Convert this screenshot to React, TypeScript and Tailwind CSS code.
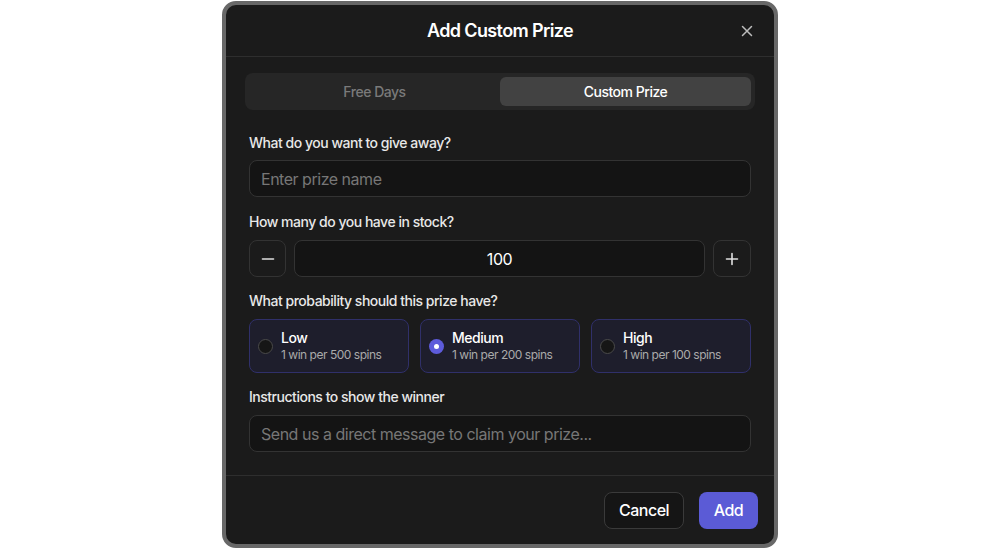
import { useState } from "react"

const levels = [
  { id: "low", title: "Low", sub: "1 win per 500 spins" },
  { id: "medium", title: "Medium", sub: "1 win per 200 spins" },
  { id: "high", title: "High", sub: "1 win per 100 spins" },
]

function Label({ children }: { children: string }) {
  return <div className="text-[14px] leading-5 font-medium text-[#e8e8e8]">{children}</div>
}

export default function App() {
  const [level, setLevel] = useState("medium")
  const [count, setCount] = useState(100)

  return (
    <div
      className="w-[1000px] h-[548px] bg-white flex justify-center tracking-[-0.03em]"
      style={{ fontFamily: "Inter, 'Noto Sans', sans-serif" }}
    >
      <div className="w-[556px] h-[547px] mt-[1px] rounded-[14px] border-4 border-[#686868] bg-[#1b1b1b] flex flex-col">
        {/* header */}
        <div className="h-[52px] flex items-center justify-center relative border-b border-[#2e2e2e]">
          <h2 className="text-[18px] font-semibold text-white tracking-[-0.035em]">Add Custom Prize</h2>
          <button className="absolute right-[20px] top-[19px] text-[#bdbdbd]">
            <svg width="14" height="14" viewBox="0 0 14 14" fill="none" stroke="currentColor" strokeWidth="1.5" strokeLinecap="round">
              <path d="M2.5 2.5l9 9M11.5 2.5l-9 9" />
            </svg>
          </button>
        </div>

        {/* body */}
        <div className="flex-1 px-[19px] pt-[16px]">
          <div className="h-[37px] rounded-lg bg-[#262626] p-1 grid grid-cols-2">
            <button className="rounded-md text-[14px] font-medium text-[#7a7a7a]">Free Days</button>
            <button className="rounded-md bg-[#424242] text-[14px] font-medium text-white">Custom Prize</button>
          </div>

          <div className="px-1">
            <div className="mt-[23px]">
              <Label>What do you want to give away?</Label>
              <input
                className="mt-[7px] w-full h-[37px] rounded-lg border border-[#333] bg-[#141414] px-[11px] text-[16px] text-white placeholder:text-[#777] outline-none"
                placeholder="Enter prize name"
              />
            </div>

            <div className="mt-[15px]">
              <Label>How many do you have in stock?</Label>
              <div className="mt-[8px] flex gap-[8px]">
                <button
                  onClick={() => setCount(Math.max(0, count - 1))}
                  className="w-[37px] h-[37px] shrink-0 rounded-lg border border-[#333] bg-[#1b1b1b] flex items-center justify-center text-[#e0e0e0]"
                >
                  <svg width="14" height="14" viewBox="0 0 14 14" fill="none" stroke="currentColor" strokeWidth="1.6" strokeLinecap="round">
                    <path d="M1.5 7h11" />
                  </svg>
                </button>
                <div className="flex-1 h-[37px] rounded-lg border border-[#333] bg-[#141414] flex items-center justify-center text-[16px] text-white">
                  {count}
                </div>
                <button
                  onClick={() => setCount(count + 1)}
                  className="w-[38px] h-[37px] shrink-0 rounded-lg border border-[#333] bg-[#1b1b1b] flex items-center justify-center text-[#e0e0e0]"
                >
                  <svg width="14" height="14" viewBox="0 0 14 14" fill="none" stroke="currentColor" strokeWidth="1.6" strokeLinecap="round">
                    <path d="M1.5 7h11M7 1.5v11" />
                  </svg>
                </button>
              </div>
            </div>

            <div className="mt-[14px]">
              <Label>What probability should this prize have?</Label>
              <div className="mt-[8px] grid grid-cols-3 gap-[11px]">
                {levels.map((l) => {
                  const on = level === l.id
                  return (
                    <button
                      key={l.id}
                      onClick={() => setLevel(l.id)}
                      className="h-[54px] rounded-lg border border-[#30306a] bg-[#1e1e2c] flex items-center gap-[8px] pl-[8px] text-left"
                    >
                      {on ? (
                        <span className="w-[15px] h-[15px] rounded-full bg-[#5d5bdb] flex items-center justify-center">
                          <span className="w-[5px] h-[5px] rounded-full bg-white" />
                        </span>
                      ) : (
                        <span className="w-[15px] h-[15px] rounded-full border border-[#4a4a4a] bg-[#161616]" />
                      )}
                      <span className="flex flex-col">
                        <span className="text-[14px] leading-[18px] font-medium text-white">{l.title}</span>
                        <span className="text-[12px] leading-[16px] text-[#aaaaaa]">{l.sub}</span>
                      </span>
                    </button>
                  )
                })}
              </div>
            </div>

            <div className="mt-[14px]">
              <Label>Instructions to show the winner</Label>
              <input
                className="mt-[8px] w-full h-[37px] rounded-lg border border-[#333] bg-[#141414] px-[11px] text-[16px] text-white placeholder:text-[#777] outline-none"
                placeholder="Send us a direct message to claim your prize..."
              />
            </div>
          </div>
        </div>

        {/* footer */}
        <div className="h-[69px] border-t border-[#2e2e2e] flex items-center justify-end gap-[15px] pr-[16px]">
          <button className="h-[37px] w-[80px] rounded-lg border border-[#3a3a3a] bg-[#151515] text-[16px] font-medium text-white">
            Cancel
          </button>
          <button className="h-[37px] w-[59px] rounded-lg bg-[#5b5bd6] text-[16px] font-medium text-white">
            Add
          </button>
        </div>
      </div>
    </div>
  )
}
